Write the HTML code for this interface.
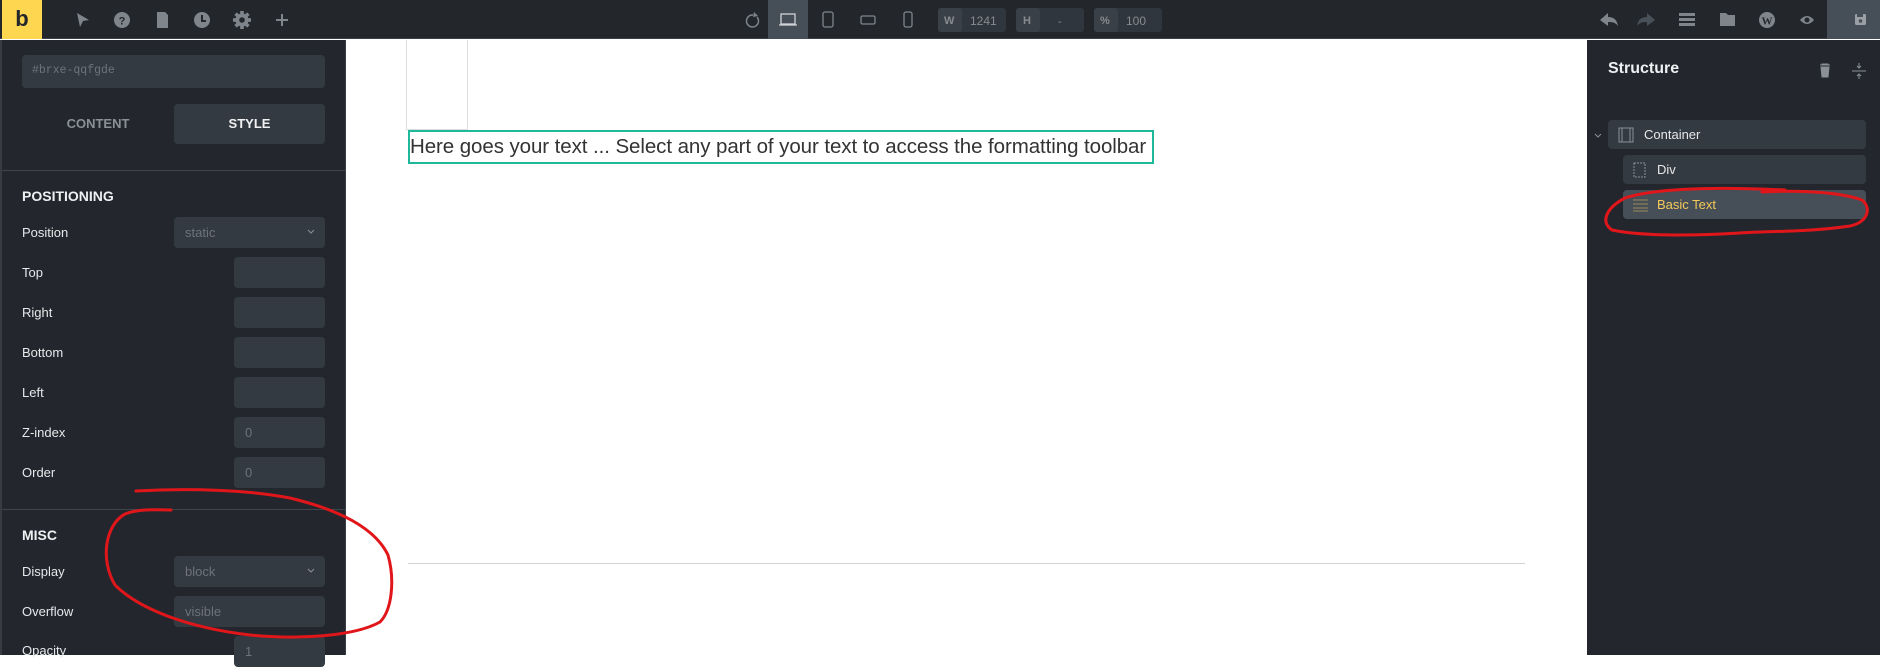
<!DOCTYPE html>
<html><head><meta charset="utf-8"><style>
*{margin:0;padding:0;box-sizing:border-box}
body{width:1880px;height:655px;overflow:hidden;background:#fff;font-family:"Liberation Sans",sans-serif;position:relative}
.abs{position:absolute}
.top{left:0;top:0;width:1880px;height:39px;background:#23272b;border-bottom:1px solid #3a4048}
.logo{left:2px;top:0;width:40px;height:39px;background:#ffd64f;font-weight:bold;font-size:22px;color:#23272b;text-align:center;line-height:38px}
.left{left:0;top:40px;width:346px;height:615px;background:#23272d;border-left:2px solid #383c42;border-right:1px solid #3a3f45}
.inp{background:#343a41;border-radius:4px;position:absolute}
.lbl{position:absolute;left:20px;color:#e6e8ea;font-size:13px}
.ph{color:#6c737b;font-size:13px;position:absolute}
.sep{position:absolute;left:0;width:344px;height:1px;background:#40454c}
.h{position:absolute;left:20px;color:#eef0f2;font-weight:bold;font-size:14px}
.right{left:1587px;top:40px;width:293px;height:615px;background:#23272d}
.row{position:absolute;background:#343a41;border-radius:4px;height:29px;color:#e6e8ea;font-size:13px;line-height:29px}
.chev{position:absolute;right:10px;top:12px}
</style></head><body>
<div class="abs top"></div>
<div class="abs logo">b</div>
<svg class="abs" style="left:0;top:0" width="1880" height="39">
 <g fill="#7f858b">
  <path d="M77 13 L89 20 L83 21 L80 27 Z"/>
  <circle cx="122" cy="20" r="8"/>
  <path d="M157 12 h8 l3 3 v13 h-11 z"/>
  <circle cx="202" cy="20" r="8"/>
  <circle cx="242" cy="20" r="6.5"/>
  <g transform="translate(242 20)"><rect x="-1.8" y="-9" width="3.6" height="18"/><rect x="-1.8" y="-9" width="3.6" height="18" transform="rotate(45)"/><rect x="-1.8" y="-9" width="3.6" height="18" transform="rotate(90)"/><rect x="-1.8" y="-9" width="3.6" height="18" transform="rotate(135)"/></g>
 </g>
 <circle cx="242" cy="20" r="2.8" fill="#23272b"/>
 <path d="M202 15 v6 h4" stroke="#23272b" stroke-width="2" fill="none"/>
 <text x="122" y="24.5" font-size="11" font-weight="bold" fill="#23272b" text-anchor="middle" font-family="Liberation Sans">?</text>
 <path d="M282 14 v12 M276 20 h12" stroke="#7f858b" stroke-width="2"/>
 <path d="M753 15 a6 6 0 1 0 4 2" stroke="#7f858b" stroke-width="1.5" fill="none"/><path d="M754 12 l4 4 -5 1z" fill="#7f858b"/>
 <rect x="768" y="0" width="40" height="39" fill="#464e57"/>
 <rect x="781" y="14" width="14" height="10" stroke="#d0d4d8" stroke-width="1.3" fill="none"/><path d="M779 25 h18" stroke="#d0d4d8" stroke-width="1.3"/>
 <rect x="823" y="12" width="10" height="15" rx="2" stroke="#7f858b" stroke-width="1.3" fill="none"/>
 <rect x="861" y="16" width="14" height="8" rx="1.5" stroke="#7f858b" stroke-width="1.3" fill="none"/>
 <rect x="904" y="12" width="8" height="15" rx="2" stroke="#7f858b" stroke-width="1.3" fill="none"/>
 <rect x="938" y="8" width="68" height="24" rx="3" fill="#30363d"/><rect x="938" y="8" width="24" height="24" rx="3" fill="#3a4047"/>
 <rect x="1016" y="8" width="68" height="24" rx="3" fill="#30363d"/><rect x="1016" y="8" width="24" height="24" rx="3" fill="#3a4047"/>
 <rect x="1094" y="8" width="68" height="24" rx="3" fill="#30363d"/><rect x="1094" y="8" width="24" height="24" rx="3" fill="#3a4047"/>
 <g font-family="Liberation Sans" font-size="11" fill="#858b91"><text x="944" y="24" font-weight="bold">W</text><text x="970" y="25" font-size="12">1241</text>
 <text x="1023" y="24" font-weight="bold">H</text><text x="1058" y="25">-</text>
 <text x="1100" y="24" font-weight="bold">%</text><text x="1126" y="25" font-size="12">100</text></g>
 <g fill="#7f858b">
  <path d="M1600 20 l8 -7 v4 c6 0 9 3 10 9 c-3 -4 -6 -4 -10 -4 v4z"/>
  <path d="M1655 20 l-8 -7 v4 c-6 0 -9 3 -10 9 c3 -4 6 -4 10 -4 v4z" fill="#4a5057"/>
  <rect x="1679" y="13" width="16" height="3"/><rect x="1679" y="18" width="16" height="3"/><rect x="1679" y="23" width="16" height="3"/>
  <path d="M1720 13 h6 l2 2 h7 v11 h-15z"/>
  <circle cx="1767" cy="20" r="8"/>
  <path d="M1800 20 q7 -8 14 0 q-7 8 -14 0z"/>
 </g>
 <circle cx="1807" cy="20" r="2.5" fill="#23272b"/>
 <text x="1767" y="24.5" font-size="11" font-weight="bold" fill="#23272b" text-anchor="middle" font-family="Liberation Serif">W</text>
 <rect x="1827" y="0" width="53" height="39" fill="#464e57"/>
 <rect x="1855" y="14" width="11" height="11" rx="1.5" fill="#9aa0a6"/><rect x="1857" y="14" width="6" height="3" fill="#464e57"/><circle cx="1860.5" cy="21" r="1.8" fill="#464e57"/>
</svg>

<div class="abs left">
 <div class="inp" style="left:20px;top:15px;width:303px;height:33px"><span class="ph" style="left:10px;top:9px;font-family:'Liberation Mono',monospace;font-size:11.5px">#brxe-qqfgde</span></div>
 <div class="abs" style="left:20px;top:64px;width:152px;height:40px;color:#8a9096;font-weight:bold;font-size:13px;text-align:center;line-height:40px">CONTENT</div>
 <div class="inp" style="left:172px;top:64px;width:151px;height:40px;color:#f0f2f4;font-weight:bold;font-size:13px;text-align:center;line-height:40px">STYLE</div>
 <div class="sep" style="top:130px"></div>
 <div class="h" style="top:148px">POSITIONING</div>
 <div class="lbl" style="top:185px">Position</div><div class="inp" style="left:172px;top:177px;width:151px;height:31px"><span class="ph" style="left:11px;top:8px">static</span><svg class="chev" width="8" height="6"><path d="M1 1l3 3 3-3" stroke="#8a9096" fill="none"/></svg></div>
 <div class="lbl" style="top:225px">Top</div><div class="inp" style="left:232px;top:217px;width:91px;height:31px"></div>
 <div class="lbl" style="top:265px">Right</div><div class="inp" style="left:232px;top:257px;width:91px;height:31px"></div>
 <div class="lbl" style="top:305px">Bottom</div><div class="inp" style="left:232px;top:297px;width:91px;height:31px"></div>
 <div class="lbl" style="top:345px">Left</div><div class="inp" style="left:232px;top:337px;width:91px;height:31px"></div>
 <div class="lbl" style="top:385px">Z-index</div><div class="inp" style="left:232px;top:377px;width:91px;height:31px"><span class="ph" style="left:11px;top:8px">0</span></div>
 <div class="lbl" style="top:425px">Order</div><div class="inp" style="left:232px;top:417px;width:91px;height:31px"><span class="ph" style="left:11px;top:8px">0</span></div>
 <div class="sep" style="top:469px"></div>
 <div class="h" style="top:487px">MISC</div>
 <div class="lbl" style="top:524px">Display</div><div class="inp" style="left:172px;top:516px;width:151px;height:31px"><span class="ph" style="left:11px;top:8px">block</span><svg class="chev" width="8" height="6"><path d="M1 1l3 3 3-3" stroke="#8a9096" fill="none"/></svg></div>
 <div class="lbl" style="top:564px">Overflow</div><div class="inp" style="left:172px;top:556px;width:151px;height:31px"><span class="ph" style="left:11px;top:8px">visible</span></div>
 <div class="lbl" style="top:603px">Opacity</div><div class="inp" style="left:232px;top:596px;width:91px;height:31px"><span class="ph" style="left:11px;top:8px">1</span></div>
</div>

<div class="abs" style="left:406px;top:40px;width:62px;height:90px;border:1px solid #ddd;border-top:none"></div>
<div class="abs" style="left:408px;top:130px;width:746px;height:34px;border:2px solid #1eb89a;font-size:20.5px;color:#333;line-height:29px;white-space:nowrap;overflow:hidden;letter-spacing:-0.08px">Here goes your text ... Select any part of your text to access the formatting toolbar</div>
<div class="abs" style="left:408px;top:563px;width:1117px;height:1px;background:#d3d3d3"></div>

<div class="abs right">
 <div class="abs" style="left:21px;top:20px;color:#eef0f2;font-weight:bold;font-size:16px">Structure</div>
 <svg class="abs" style="left:230px;top:22px" width="60" height="20"><path d="M3 3h10M5 3v-1h6v1M4 5h8l-1 10h-6z" fill="#8a9096" stroke="#8a9096"/><path d="M35 9h14M42 1v5M42 12v5M40 4l2 2 2-2M40 14l2-2 2 2" stroke="#8a9096" fill="none"/></svg>
 <svg class="abs" style="left:7px;top:93px" width="8" height="6"><path d="M1 1l3 3 3-3" stroke="#8a9096" fill="none"/></svg>
 <div class="row" style="left:21px;top:80px;width:258px"><svg class="abs" style="left:10px;top:7px" width="16" height="16"><rect x="1" y="1" width="14" height="14" fill="none" stroke="#8a9096"/><path d="M4 1v14M12 1v14" stroke="#8a9096"/></svg><span style="position:absolute;left:36px">Container</span></div>
 <div class="row" style="left:36px;top:115px;width:243px"><svg class="abs" style="left:10px;top:7px" width="14" height="16"><rect x="1" y="1" width="11" height="14" fill="none" stroke="#8a9096" stroke-dasharray="2 1"/></svg><span style="position:absolute;left:34px">Div</span></div>
 <div class="row" style="left:36px;top:150px;width:243px;background:#464e57;color:#f5c95a"><svg class="abs" style="left:10px;top:8px" width="16" height="14"><path d="M0 2h15M0 6h15M0 10h15M0 13h15" stroke="#9a8a5a"/></svg><span style="position:absolute;left:34px">Basic Text</span></div>
</div>

<svg class="abs" style="left:0;top:0" width="1880" height="655" fill="none" stroke="#e0161a" stroke-width="3" stroke-linecap="round">
 <path d="M136 491 C190 488 250 490 290 498 C340 510 375 528 388 555 C395 580 392 610 380 622 C355 636 300 640 250 635 C190 628 140 610 115 585 C100 560 105 525 125 514 C140 508 160 510 171 510"/>
 <path d="M1762 192 C1800 190 1840 192 1862 200 C1872 208 1868 222 1850 226 C1810 232 1770 231 1740 233 C1690 236 1640 236 1612 230 C1600 222 1606 208 1625 198 C1650 190 1700 186 1785 190"/>
</svg>
</body></html>
